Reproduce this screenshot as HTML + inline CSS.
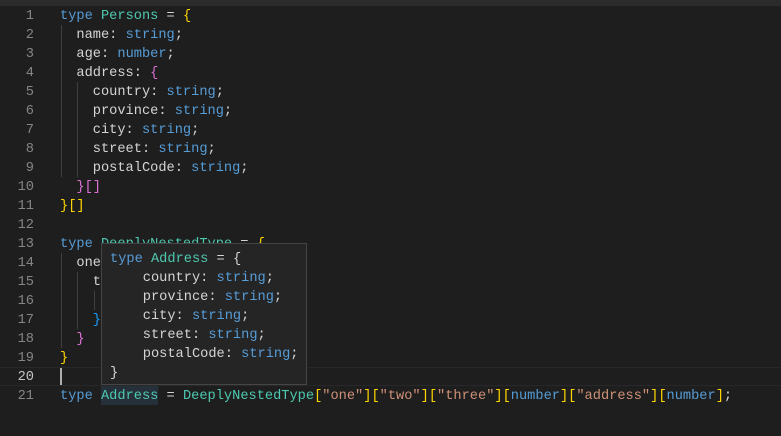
<!DOCTYPE html>
<html><head><style>
body{margin:0;width:781px;height:436px;background:#1e1e1e;overflow:hidden;position:relative;font-family:"Liberation Mono",monospace;font-size:13.67px;}
.top{position:absolute;left:0;top:0;width:781px;height:6px;background:#2b2b2b;}
.ln{position:absolute;left:0;width:34px;text-align:right;color:#858585;height:19px;line-height:19px;padding-top:1px;}
.l{position:absolute;left:60px;height:19px;line-height:19px;padding-top:1px;white-space:pre;color:#d4d4d4;}
.k{color:#569cd6}.t{color:#4ec9b0}.s{color:#ce9178}
.g{color:#ffd700}.p{color:#da70d6}.b{color:#179fff}
.guide{position:absolute;width:1px;background:#404040;}
.cur{position:absolute;left:0;top:367px;width:781px;height:17px;border-top:1px solid #282828;border-bottom:1px solid #282828;}
.tip{position:absolute;left:101px;top:243px;width:204px;height:140px;background:#252526;border:1px solid #454545;}
.tl{position:absolute;left:8px;height:19px;line-height:19px;padding-top:1px;white-space:pre;color:#d4d4d4;}
</style></head><body>
<div class="top"></div>
<div class="cur"></div>
<div style="position:absolute;left:60px;top:368px;width:2px;height:17px;background:#aeafad"></div>
<div class="guide" style="left:61px;top:25px;height:152px"></div>
<div class="guide" style="left:77px;top:82px;height:95px"></div>
<div class="guide" style="left:61px;top:253px;height:95px"></div>
<div class="guide" style="left:77px;top:272px;height:57px"></div>
<div class="guide" style="left:94px;top:291px;height:19px"></div>
<div style="position:absolute;left:101px;top:386px;width:57px;height:19px;background:#26303a"></div>

<div class="ln" style="top:6px">1</div>
<div class="ln" style="top:25px">2</div>
<div class="ln" style="top:44px">3</div>
<div class="ln" style="top:63px">4</div>
<div class="ln" style="top:82px">5</div>
<div class="ln" style="top:101px">6</div>
<div class="ln" style="top:120px">7</div>
<div class="ln" style="top:139px">8</div>
<div class="ln" style="top:158px">9</div>
<div class="ln" style="top:177px">10</div>
<div class="ln" style="top:196px">11</div>
<div class="ln" style="top:215px">12</div>
<div class="ln" style="top:234px">13</div>
<div class="ln" style="top:253px">14</div>
<div class="ln" style="top:272px">15</div>
<div class="ln" style="top:291px">16</div>
<div class="ln" style="top:310px">17</div>
<div class="ln" style="top:329px">18</div>
<div class="ln" style="top:348px">19</div>
<div class="ln" style="top:367px;color:#c6c6c6">20</div>
<div class="ln" style="top:386px">21</div>

<div class="l" style="top:6px"><span class="k">type</span> <span class="t">Persons</span> = <span class="g">{</span></div>
<div class="l" style="top:25px">  name: <span class="k">string</span>;</div>
<div class="l" style="top:44px">  age: <span class="k">number</span>;</div>
<div class="l" style="top:63px">  address: <span class="p">{</span></div>
<div class="l" style="top:82px">    country: <span class="k">string</span>;</div>
<div class="l" style="top:101px">    province: <span class="k">string</span>;</div>
<div class="l" style="top:120px">    city: <span class="k">string</span>;</div>
<div class="l" style="top:139px">    street: <span class="k">string</span>;</div>
<div class="l" style="top:158px">    postalCode: <span class="k">string</span>;</div>
<div class="l" style="top:177px">  <span class="p">}[]</span></div>
<div class="l" style="top:196px"><span class="g">}[]</span></div>
<div class="l" style="top:234px"><span class="k">type</span> <span class="t">DeeplyNestedType</span> = <span class="g">{</span></div>
<div class="l" style="top:253px">  one: <span class="p">{</span></div>
<div class="l" style="top:272px">    two: <span class="b">{</span></div>
<div class="l" style="top:291px">      three: <span class="t">Persons</span></div>
<div class="l" style="top:310px">    <span class="b">}</span></div>
<div class="l" style="top:329px">  <span class="p">}</span></div>
<div class="l" style="top:348px"><span class="g">}</span></div>
<div class="l" style="top:386px"><span class="k">type</span> <span class="t">Address</span> = <span class="t">DeeplyNestedType</span><span class="g">[</span><span class="s">"one"</span><span class="g">][</span><span class="s">"two"</span><span class="g">][</span><span class="s">"three"</span><span class="g">][</span><span class="k">number</span><span class="g">][</span><span class="s">"address"</span><span class="g">][</span><span class="k">number</span><span class="g">]</span>;</div>

<div class="tip">
<div class="tl" style="top:5px"><span class="k">type</span> <span class="t">Address</span> = {</div>
<div class="tl" style="top:24px">    country: <span class="k">string</span>;</div>
<div class="tl" style="top:43px">    province: <span class="k">string</span>;</div>
<div class="tl" style="top:62px">    city: <span class="k">string</span>;</div>
<div class="tl" style="top:81px">    street: <span class="k">string</span>;</div>
<div class="tl" style="top:100px">    postalCode: <span class="k">string</span>;</div>
<div class="tl" style="top:119px">}</div>
</div>
</body></html>
